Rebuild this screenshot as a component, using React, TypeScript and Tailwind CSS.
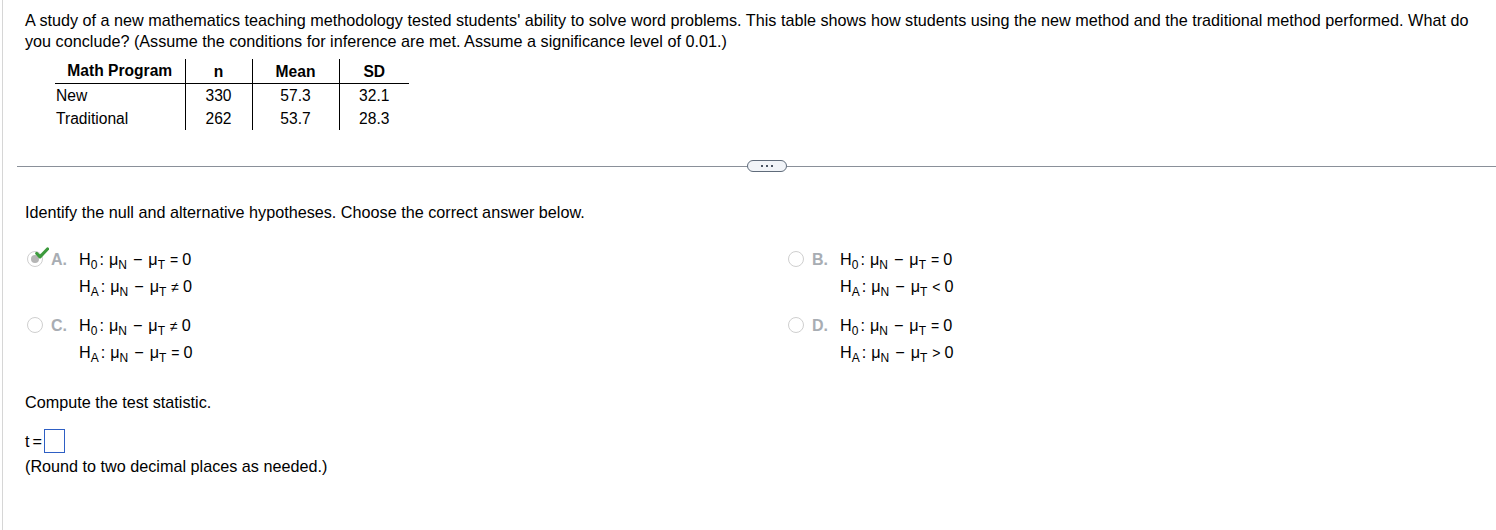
import React from 'react';

const font = { fontFamily: '"Liberation Sans", Arial, sans-serif' };

function Mu({ sub }: { sub: string }) {
  return (
    <span>
      μ<sub className="relative top-[4px] align-baseline text-[12px] leading-none">{sub}</sub>
    </span>
  );
}

function Hyp({ h, op }: { h: string; op: string }) {
  return (
    <div className="flex h-[27px] items-baseline whitespace-pre text-[16.2px] leading-[27px] text-black">
      <span>
        H<sub className="relative top-[4px] align-baseline text-[12px] leading-none">{h}</sub>
      </span>
      <span className="ml-[2px] mr-[5px]">:</span>
      <Mu sub="N" />
      <span className="mx-[6px]">−</span>
      <Mu sub="T" />
      <span className="ml-[5px] text-[14px]">{op}</span>
      <span className="ml-[4px]">0</span>
    </div>
  );
}

function Radio({ checked }: { checked?: boolean }) {
  return (
    <span className="relative mt-[5px] inline-block h-[16px] w-[16px] shrink-0">
      <span className="absolute inset-0 rounded-full border border-[#cfcfcf] bg-white" />
      {checked && (
        <>
          <span className="absolute left-[4px] top-[4px] h-[8px] w-[8px] rounded-full bg-[#b5b5b5]" />
          <svg className="absolute -right-[6px] -top-[4px]" width="14" height="13" viewBox="0 0 14 13">
            <path d="M1.8 6.5 L5 9.8 L12.5 2" fill="none" stroke="#3c9a3c" strokeWidth="3.2" strokeLinecap="round" strokeLinejoin="round" />
          </svg>
        </>
      )}
    </span>
  );
}

function Option({ letter, h0, ha, checked }: { letter: string; h0: string; ha: string; checked?: boolean }) {
  return (
    <div className="flex items-start">
      <Radio checked={checked} />
      <span className="ml-[8px] w-[28px] text-[16px] font-bold leading-[27px] text-[#a8adb3]">{letter}.</span>
      <div className="flex flex-col">
        <Hyp h="0" op={h0} />
        <Hyp h="A" op={ha} />
      </div>
    </div>
  );
}

export default function App() {
  const rows = [
    ['New', '330', '57.3', '32.1'],
    ['Traditional', '262', '53.7', '28.3'],
  ];
  return (
    <div style={font} className="h-[530px] w-[1496px] overflow-hidden bg-white text-black">
      <div className="ml-[2px] h-full border-l border-[#d6d6d6] pl-[22px] pt-[10px]">
        <p className="pr-[14px] text-[16.2px] leading-[21px]">
          A study of a new mathematics teaching methodology tested students' ability to solve word problems. This table shows how students using the new method and the traditional method performed. What do you conclude? (Assume the conditions for inference are met. Assume a significance level of 0.01.)
        </p>

        <table className="ml-[30px] mt-[7px] border-collapse text-[15.6px] leading-[23px]">
          <thead>
            <tr>
              <th className="w-[130px] border-b border-r border-black pb-[1px] text-center font-bold">Math Program</th>
              <th className="w-[67px] border-b border-r border-black text-center font-bold">n</th>
              <th className="w-[87px] border-b border-r border-black text-center font-bold">Mean</th>
              <th className="w-[70px] border-b border-black text-center font-bold">SD</th>
            </tr>
          </thead>
          <tbody>
            {rows.map(r => (
              <tr key={r[0]}>
                <td className="border-r border-black pl-[1px] text-left font-normal">{r[0]}</td>
                <td className="border-r border-black text-center">{r[1]}</td>
                <td className="border-r border-black text-center">{r[2]}</td>
                <td className="text-center">{r[3]}</td>
              </tr>
            ))}
          </tbody>
        </table>

        <div className="ml-[-8px] mt-[30px] flex items-center">
          <div className="h-px flex-1 bg-[#8a9099]" />
          <button className="flex h-[12px] w-[40px] items-center justify-center gap-[3px] rounded-full border border-[#5f6b7a] bg-[#f1f4f8]">
            <span className="h-[2px] w-[2px] bg-[#4b5563]" />
            <span className="h-[2px] w-[2px] bg-[#4b5563]" />
            <span className="h-[2px] w-[2px] bg-[#4b5563]" />
          </button>
          <div className="h-px w-[709px] bg-[#8a9099]" />
        </div>

        <p className="mt-[30px] text-[16.2px] leading-[21px]">Identify the null and alternative hypotheses. Choose the correct answer below.</p>

        <div className="mt-[23px] grid grid-cols-[761px_1fr] gap-y-[12px] pl-[2px]">
          <Option letter="A" h0="=" ha="≠" checked />
          <Option letter="B" h0="=" ha="<" />
          <Option letter="C" h0="≠" ha="=" />
          <Option letter="D" h0="=" ha=">" />
        </div>

        <p className="mt-[26px] text-[16.2px] leading-[21px]">Compute the test statistic.</p>

        <div className="mt-[16px] flex items-center text-[16.2px] leading-[21px]">
          <span>t</span>
          <span className="ml-[3px]">=</span>
          <span className="ml-[2px] inline-block h-[24px] w-[21px] border-[1.5px] border-[#2e5fc4] bg-white" />
        </div>
        <p className="mt-[3px] text-[16.2px] leading-[21px]">(Round to two decimal places as needed.)</p>
      </div>
    </div>
  );
}
